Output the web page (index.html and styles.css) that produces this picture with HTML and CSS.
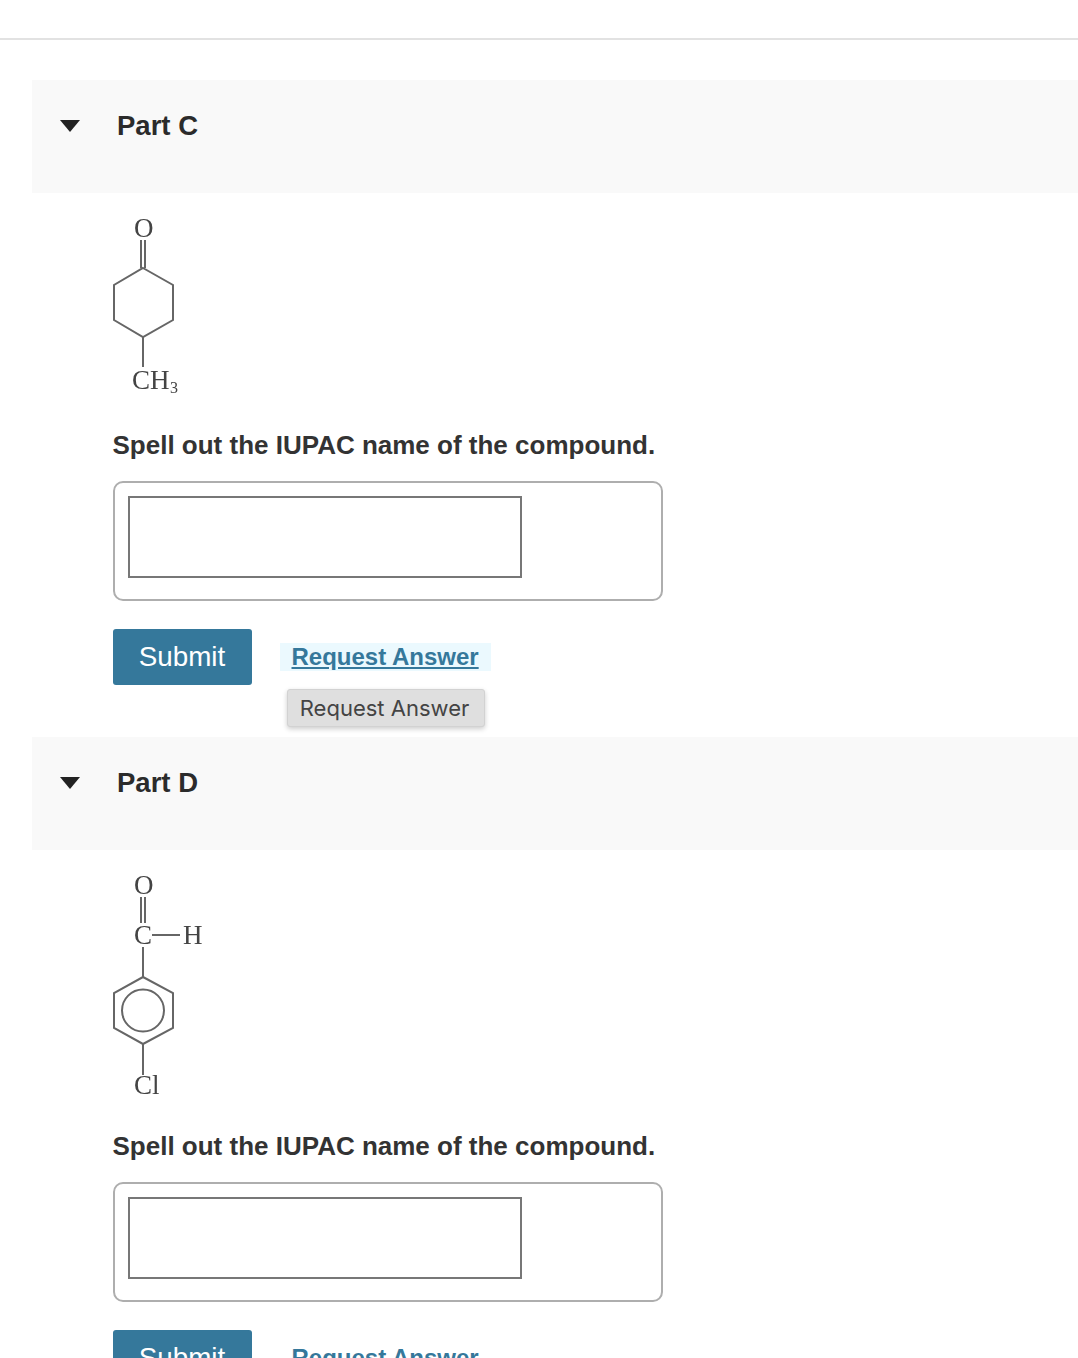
FILE: index.html
```html
<!DOCTYPE html>
<html lang="en">
<head>
<meta charset="utf-8">
<title>Parts C and D</title>
<link rel="stylesheet" href="styles.css">
</head>
<body>
<div class="topbar"></div>
<main class="parts">
  <section class="part part-c">
    <header class="part-head">
      <span class="caret"></span>
      <h2 class="part-title">Part C</h2>
    </header>
    <div class="part-body">
      <svg class="molecule mol-c" width="110" height="208" viewBox="0 0 110 208">
        <g class="bonds">
          <path d="M28 47V75M32 47V75"/>
          <path d="M30 75L60 92V127L30 144L1 127V92Z"/>
          <path d="M30 144V174"/>
        </g>
        <text class="atom" x="21" y="44">O</text>
        <text class="atom" x="19" y="196">CH</text>
        <text class="atom sub" x="57" y="200">3</text>
      </svg>
      <p class="prompt">Spell out the IUPAC name of the compound.</p>
      <div class="answer-box"><input class="answer-input" type="text" aria-label="Answer"></div>
      <div class="actions">
        <button class="submit" type="button">Submit</button>
        <a class="request request-hover" href="#">Request Answer</a>
        <span class="tooltip">Request Answer</span>
      </div>
    </div>
  </section>
  <section class="part part-d">
    <header class="part-head">
      <span class="caret"></span>
      <h2 class="part-title">Part D</h2>
    </header>
    <div class="part-body">
      <svg class="molecule mol-d" width="110" height="252" viewBox="0 0 110 252">
        <g class="bonds">
          <path d="M28 47V73M32 47V73"/>
          <path d="M39 85H67"/>
          <path d="M30 97V127"/>
          <path d="M30 127L60 143V178L30 194L1 178V143Z"/>
          <circle cx="30" cy="160.5" r="21"/>
          <path d="M30 194V225"/>
        </g>
        <text class="atom" x="21" y="44">O</text>
        <text class="atom" x="21" y="94">C</text>
        <text class="atom" x="70" y="94">H</text>
        <text class="atom" x="21" y="244">Cl</text>
      </svg>
      <p class="prompt">Spell out the IUPAC name of the compound.</p>
      <div class="answer-box"><input class="answer-input" type="text" aria-label="Answer"></div>
      <div class="actions">
        <button class="submit" type="button">Submit</button>
        <a class="request" href="#">Request Answer</a>
      </div>
    </div>
  </section>
</main>
</body>
</html>
```
FILE: styles.css
```css
* { box-sizing: border-box; }
html, body { margin: 0; height: 1358px; overflow: hidden; background: #fff; }
body { font-family: "Liberation Sans", Arial, sans-serif; color: #333; }
.topbar { height: 40px; border-bottom: 2px solid #e2e2e2; }
.parts { padding: 40px 0 0 32px; }
.part { height: 657px; }
.part-head { height: 113px; background: #f9f9f9; display: flex; align-items: flex-start; padding: 28px 0 0 28px; }
.caret { width: 0; height: 0; margin-top: 12px; border-left: 10.5px solid transparent; border-right: 10.5px solid transparent; border-top: 12px solid #222; }
.part-title { margin: 0 0 0 37px; font-size: 27.5px; line-height: 36px; font-weight: 700; color: #2b2b2b; }
.part-body { padding-left: 81px; }
.molecule { display: block; filter: blur(0.4px); }
.bonds { fill: none; stroke: #666; stroke-width: 2; }
.atom { font-family: "Liberation Serif", serif; font-size: 27px; fill: #444; stroke: none; }
.sub { font-size: 16px; }
.prompt { margin: 19px 0 0 -0.5px; font-size: 26px; line-height: 50px; height: 50px; font-weight: 700; color: #333; }
.answer-box { width: 550px; height: 120px; margin-top: 11px; padding: 13px; border: 2px solid #aeaeae; border-radius: 10px; background: #fff; }
.answer-input { display: block; width: 394px; height: 82px; padding: 0; border: 2px solid #777; border-radius: 0; background: #fff; }
.actions { position: relative; display: flex; align-items: center; margin-top: 28px; height: 56px; }
.submit { width: 139px; height: 56px; padding: 0 1px 0 0; border: 0; border-radius: 3px; background: #35789b; color: #fff; font-family: inherit; font-size: 27.8px; }
.request { margin-left: 28px; padding: 0 12.5px 0 11.5px; height: 28px; line-height: 28px; font-size: 24px; font-weight: 700; color: #35789b; text-decoration: underline; }
.request-hover { background: #ebf9fe; }
.tooltip { position: absolute; left: 174px; top: 60px; width: 198px; height: 38px; line-height: 37px; padding-right: 3px; text-align: center; background: #dfdfdf; border: 1px solid #d2d2d2; border-radius: 3px; box-shadow: 0 2px 5px rgba(0,0,0,.2); font-family: Inter, sans-serif; font-size: 22px; color: #444; }
```
